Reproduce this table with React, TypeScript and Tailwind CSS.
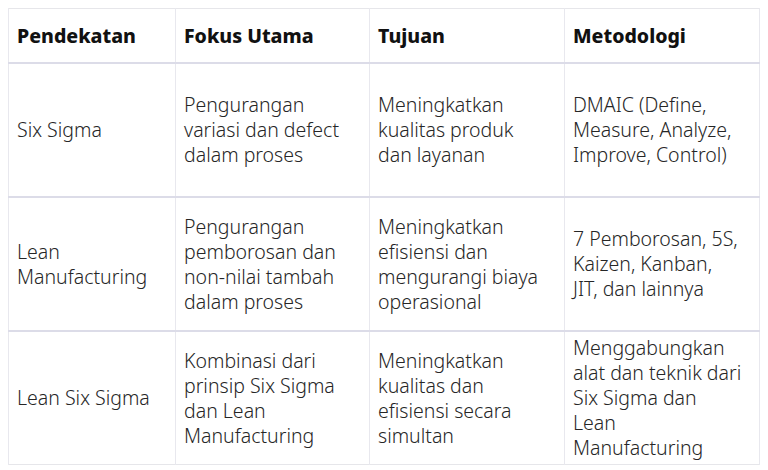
import React from "react";

const rows: string[][][] = [
  [
    ["Six Sigma"],
    ["Pengurangan", "variasi dan defect", "dalam proses"],
    ["Meningkatkan", "kualitas produk", "dan layanan"],
    ["DMAIC (Define,", "Measure, Analyze,", "Improve, Control)"],
  ],
  [
    ["Lean", "Manufacturing"],
    ["Pengurangan", "pemborosan dan", "non-nilai tambah", "dalam proses"],
    ["Meningkatkan", "efisiensi dan", "mengurangi biaya", "operasional"],
    ["7 Pemborosan, 5S,", "Kaizen, Kanban,", "JIT, dan lainnya"],
  ],
  [
    ["Lean Six Sigma"],
    ["Kombinasi dari", "prinsip Six Sigma", "dan Lean", "Manufacturing"],
    ["Meningkatkan", "kualitas dan", "efisiensi secara", "simultan"],
    ["Menggabungkan", "alat dan teknik dari", "Six Sigma dan", "Lean", "Manufacturing"],
  ],
];

const headers = ["Pendekatan", "Fokus Utama", "Tujuan", "Metodologi"];

export default function App() {
  return (
    <div
      className="w-[768px] h-[470px] bg-white pt-[8px] pl-[8px]"
      style={{ fontFamily: "'Noto Sans', sans-serif" }}
    >
      <table className="w-[751px] border-collapse table-fixed text-[#262626] border border-[#e6e6ea]">
        <colgroup>
          <col className="w-[167px]" />
          <col className="w-[194px]" />
          <col className="w-[195px]" />
          <col className="w-[195px]" />
        </colgroup>
        <thead>
          <tr className="h-[54px] border-b-2 border-[#dcdce8]">
            {headers.map((h) => (
              <th
                key={h}
                className="text-left font-extrabold text-[19.5px] leading-[25px] text-[#111111] px-[8px] border-x border-[#e8e8ee] align-middle whitespace-nowrap"
              >
                {h}
              </th>
            ))}
          </tr>
        </thead>
        <tbody>
          {rows.map((r, i) => (
            <tr
              key={i}
              className={`h-[134px] ${i < rows.length - 1 ? "border-b-2 border-[#dcdce8]" : ""}`}
            >
              {r.map((c, j) => (
                <td
                  key={j}
                  className="text-[19.5px] font-light leading-[25px] px-[8px] border-x border-[#e8e8ee] align-middle whitespace-nowrap"
                >
                  {c.map((line, k) => (
                    <div key={k}>{line}</div>
                  ))}
                </td>
              ))}
            </tr>
          ))}
        </tbody>
      </table>
    </div>
  );
}
